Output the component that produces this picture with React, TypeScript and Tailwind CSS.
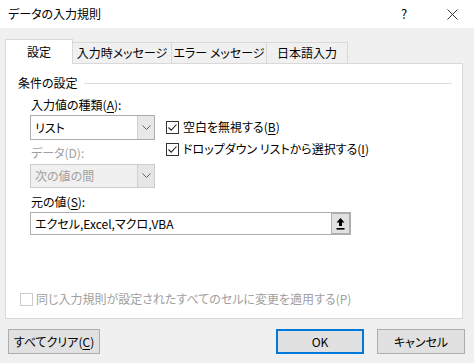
const font = { fontFamily: '"Noto Sans CJK JP", "Noto Sans", sans-serif' };

const Chevron = () => (
  <svg width="9" height="6" viewBox="0 0 9 6" fill="none" stroke="#606060" strokeWidth="1">
    <path d="M0.5 0.5 L4.5 4.5 L8.5 0.5" />
  </svg>
);

const Check = ({ checked, disabled }: { checked?: boolean; disabled?: boolean }) => (
  <div
    className={`flex h-[13px] w-[13px] shrink-0 items-center justify-center border bg-white ${
      disabled ? 'border-[#cccccc]' : 'border-[#333333]'
    }`}
  >
    {checked && (
      <svg width="11" height="11" viewBox="0 0 11 11" fill="none" stroke="#222" strokeWidth="1.1">
        <path d="M1.5 5.5 L4.2 8.2 L9.5 2.5" />
      </svg>
    )}
  </div>
);

const U = ({ children }: { children: string }) => <span className="underline underline-offset-2">{children}</span>;

export default function App() {
  return (
    <div
      className="flex h-[363px] w-[474px] flex-col overflow-hidden bg-[#f0f0f0] text-[12px] leading-[16px] text-black [font-feature-settings:'palt']"
      style={font}
    >
      {/* title bar */}
      <div className="flex h-[28px] items-center bg-white pl-[8px]">
        <span className="flex-1">データの入力規則</span>
        <span className="w-[20px] text-center text-[13px]">?</span>
        <div className="ml-[28px] mr-[12px] flex w-[20px] justify-center">
          <svg width="11" height="11" viewBox="0 0 11 11" stroke="#333" strokeWidth="1">
            <path d="M0.5 0.5 L10.5 10.5 M10.5 0.5 L0.5 10.5" />
          </svg>
        </div>
      </div>

      <div className="pl-[5px] pt-[10px]">
        {/* tabs */}
        <div className="flex h-[25px] items-end">
          <div className="relative z-10 -mb-px flex h-[25px] w-[68px] items-center justify-center border border-b-0 border-[#d9d9d9] bg-white pb-[1px]">
            設定
          </div>
          <div className="flex h-[21px] w-[99px] items-center justify-center border border-b-0 border-l-0 border-[#d9d9d9]">
            入力時メッセージ
          </div>
          <div className="flex h-[21px] w-[95px] items-center justify-center border border-b-0 border-l-0 border-[#d9d9d9]">
            エラー メッセージ
          </div>
          <div className="flex h-[21px] w-[81px] items-center justify-center border border-b-0 border-l-0 border-[#d9d9d9]">
            日本語入力
          </div>
        </div>

        {/* panel */}
        <div className="h-[256px] w-[458px] border border-[#d9d9d9] bg-white pt-[11px]">
          <div className="flex items-center pl-[12px] pr-[10px]">
            <span>条件の設定</span>
            <div className="ml-[6px] h-px flex-1 bg-[#dcdcdc]" />
          </div>

          <div className="pl-[24px]">
            <div className="mt-[6px] pl-px">
              入力値の種類(<U>A</U>):
            </div>
            <div className="mt-[2px] flex">
              <div className="w-[125px]">
                <div className="flex h-[25px] border border-[#adadad] bg-white">
                  <span className="flex flex-1 items-center pl-[4px]">リスト</span>
                  <div className="flex w-[17px] items-center justify-center border-l border-[#d0d0d0] bg-[#e8e8e8]">
                    <Chevron />
                  </div>
                </div>
                <div className="mt-[5px] pl-px text-[#a0a0a0]">データ(D):</div>
                <div className="mt-[3px] flex h-[24px] border border-[#cccccc] bg-[#f0f0f0]">
                  <span className="flex flex-1 items-center pl-[4px] text-[#a0a0a0]">次の値の間</span>
                  <div className="flex w-[17px] items-center justify-center border-l border-[#d0d0d0] bg-[#e6e6e6]">
                    <Chevron />
                  </div>
                </div>
              </div>
              <div className="ml-[11px] flex flex-col gap-[6px] pt-[4px]">
                <div className="flex h-[16px] items-center gap-[4px]">
                  <Check checked />
                  <span>
                    空白を無視する(<U>B</U>)
                  </span>
                </div>
                <div className="flex h-[16px] items-center gap-[4px]">
                  <Check checked />
                  <span>
                    ドロップダウン リストから選択する(<U>I</U>)
                  </span>
                </div>
              </div>
            </div>

            <div className="mt-[6px] pl-px">
              元の値(<U>S</U>):
            </div>
            <div className="mt-[2px] flex h-[23px] w-[321px] border border-[#adadad] bg-white">
              <span className="flex flex-1 items-center pl-[4px]">エクセル,Excel,マクロ,VBA</span>
              <div className="flex w-[19px] items-center justify-center border border-[#adadad] bg-[#e1e1e1]">
                <svg width="9" height="12" viewBox="0 0 9 12" fill="#000">
                  <path d="M4.5 0 L8.5 4.5 L6 4.5 L6 8 L3 8 L3 4.5 L0.5 4.5 Z" />
                  <rect x="0.5" y="10" width="8" height="1.6" />
                </svg>
              </div>
            </div>
          </div>

          <div className="mt-[56px] flex items-center gap-[3px] pl-[14px] text-[#a0a0a0]">
            <Check disabled />
            <span>同じ入力規則が設定されたすべてのセルに変更を適用する(P)</span>
          </div>
        </div>

        {/* buttons */}
        <div className="mt-[10px] flex items-center pl-[3px]">
          <button className="flex h-[25px] w-[92px] items-center justify-center border border-[#adadad] bg-[#e1e1e1]">
            すべてクリア(<U>C</U>)
          </button>
          <div className="flex-1" />
          <button className="flex h-[25px] w-[88px] items-center justify-center border border-[#0078d7] bg-[#e1e1e1] shadow-[inset_0_0_0_1px_#0078d7]">
            OK
          </button>
          <button className="ml-[13px] mr-[9px] flex h-[25px] w-[88px] items-center justify-center border border-[#adadad] bg-[#e1e1e1]">
            キャンセル
          </button>
        </div>
      </div>
    </div>
  );
}
